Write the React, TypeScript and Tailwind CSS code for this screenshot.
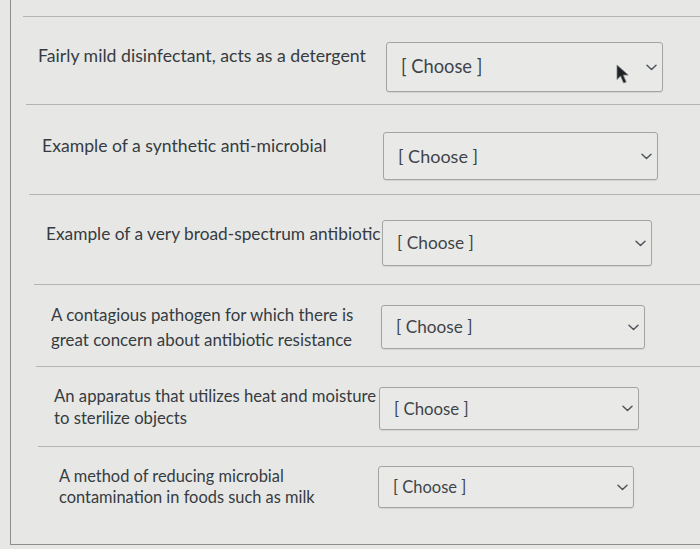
import React from "react";

type Row = {
  lines: string[];
  inner: string;
  row: string;
  textBox: string;
  textPt: string;
  lh: string;
  fs: string;
  cfs: string;
  selPt: string;
  sel: string;
  extra?: boolean;
};

const rows: Row[] = [
  {
    lines: ["Fairly mild disinfectant, acts as a detergent"],
    inner: "pl-[12px]",
    row: "h-[88px]",
    textBox: "pl-[15px] w-[363px]",
    textPt: "pt-[28px]",
    lh: "leading-[22px]",
    fs: "text-[17.7px]",
    cfs: "text-[18.3px]",
    selPt: "pt-[25px]",
    sel: "w-[277px] h-[50px]",
    extra: true,
  },
  {
    lines: ["Example of a synthetic anti-microbial"],
    inner: "pl-[15px]",
    row: "h-[90px]",
    textBox: "pl-[16px] w-[357px]",
    textPt: "pt-[30px]",
    lh: "leading-[22px]",
    fs: "text-[17.6px]",
    cfs: "text-[18px]",
    selPt: "pt-[27px]",
    sel: "w-[275px] h-[48px]",
  },
  {
    lines: ["Example of a very broad-spectrum antibiotic"],
    inner: "pl-[18px]",
    row: "h-[90px]",
    textBox: "pl-[17px] w-[353px]",
    textPt: "pt-[28px]",
    lh: "leading-[22px]",
    fs: "text-[17.3px]",
    cfs: "text-[17.3px]",
    selPt: "pt-[25px]",
    sel: "w-[270px] h-[46px]",
  },
  {
    lines: ["A contagious pathogen for which there is", "great concern about antibiotic resistance"],
    inner: "pl-[23px]",
    row: "h-[82px]",
    textBox: "pl-[17px] w-[347px]",
    textPt: "pt-[17px]",
    lh: "leading-[25px]",
    fs: "text-[16.9px]",
    cfs: "text-[17.2px]",
    selPt: "pt-[20px]",
    sel: "w-[264px] h-[44px]",
  },
  {
    lines: ["An apparatus that utilizes heat and moisture", "to sterilize objects"],
    inner: "pl-[25px]",
    row: "h-[80px]",
    textBox: "pl-[18px] w-[343px]",
    textPt: "pt-[18px]",
    lh: "leading-[22px]",
    fs: "text-[16.7px]",
    cfs: "text-[16.8px]",
    selPt: "pt-[20px]",
    sel: "w-[260px] h-[43px]",
  },
  {
    lines: ["A method of reducing microbial", "contamination in foods such as milk"],
    inner: "pl-[27px]",
    row: "h-[97px]",
    textBox: "pl-[21px] w-[340px]",
    textPt: "pt-[18px]",
    lh: "leading-[21px]",
    fs: "text-[16.4px]",
    cfs: "text-[16.5px]",
    selPt: "pt-[19px]",
    sel: "w-[256px] h-[42px]",
  },
];

function Chevron() {
  return (
    <svg width="11" height="7" viewBox="0 0 11 7" fill="none">
      <path d="M1 1.2 L5.5 5.5 L10 1.2" stroke="#51565c" strokeWidth="1.5" strokeLinecap="round" strokeLinejoin="round" />
    </svg>
  );
}

function Cursor() {
  return (
    <svg width="14" height="21" viewBox="0 0 14 21" className="absolute left-[229px] top-[21px]">
      <path d="M1 1 L1 15.5 L4.6 12 L7.6 19 L10.2 18 L7.2 11 L12.2 11 Z" fill="#1e2125" stroke="#7a7e82" strokeWidth="0.8" strokeLinejoin="round" />
    </svg>
  );
}

export default function App() {
  return (
    <div
      className="w-[700px] h-[549px] overflow-hidden bg-[#e7e8e6] text-[#363b41]"
      style={{ fontFamily: "Lato, 'Open Sans', 'Liberation Sans', sans-serif" }}
    >
      <div className="ml-[10px] h-[545px] border-l border-b border-[#8d8f8e] pt-[16px]">
        {rows.map((r, i) => (
          <div key={i} className={r.inner}>
            <div className={`${r.row} border-t border-[#b3b5b4] flex items-start`}>
              <div className={`${r.textBox} ${r.textPt} ${r.lh} ${r.fs} shrink-0`}>
                {r.lines.map((l, j) => (
                  <div key={j} className="whitespace-nowrap">
                    {l}
                  </div>
                ))}
              </div>
              <div className={`${r.selPt} shrink-0`}>
                <div
                  className={`${r.sel} relative flex items-center justify-between pl-[14px] pr-[5px] border border-[#a3a5a4] rounded-[3px] bg-[#e9eae8] shadow-[0_1px_1px_rgba(0,0,0,0.08)]`}
                >
                  <span className={`${r.cfs} text-[#3f444a]`}>[ Choose ]</span>
                  <Chevron />
                  {r.extra ? <Cursor /> : null}
                </div>
              </div>
            </div>
          </div>
        ))}
      </div>
    </div>
  );
}
